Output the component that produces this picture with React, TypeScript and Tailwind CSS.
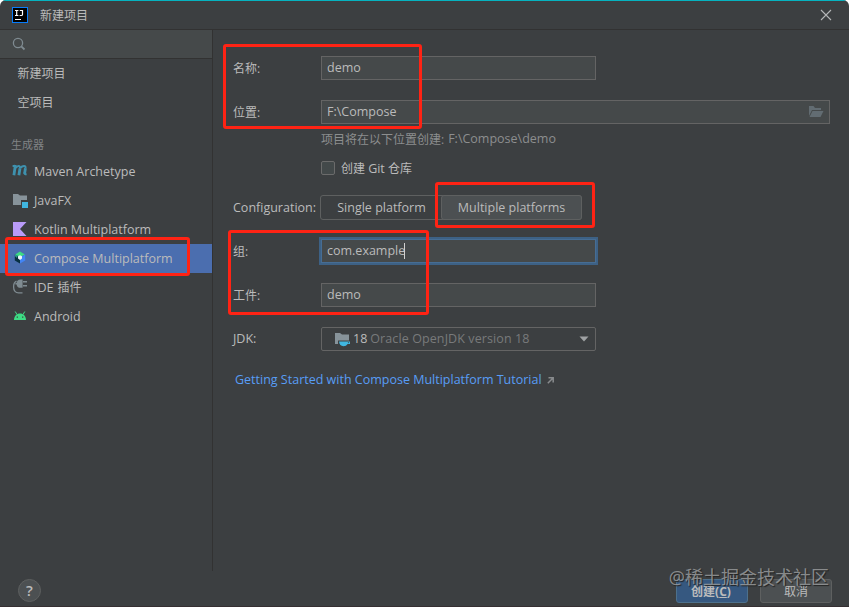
import React from 'react';
import clsx from 'clsx';

const latin = 'text-[12.5px]';

function Frame({ className }: { className: string }) {
  return (
    <div
      className={clsx('pointer-events-none absolute rounded-[3px] border-3 border-[#ff2314]', className)}
    />
  );
}

function MavenIcon() {
  return (
    <svg width="16" height="16" viewBox="0 0 16 16" fill="none" stroke="#3e91ae">
      <path strokeWidth="2.8" d="M3.400 2L1.900 12.200M8 5.200L6.900 12.200M13.400 5.200L12.600 10.600" />
      <path strokeWidth="2" d="M0.600 2.900H4M3.500 5Q5 2.900 6.600 2.900T8 5.400M8.400 5Q10 2.900 12 2.900T13.400 5.400M12.300 9.600Q12.200 11.300 14.600 11.200" />
    </svg>
  );
}

function JavaFxIcon() {
  return (
    <svg width="16" height="16" viewBox="0 0 16 16">
      <path fill="#87939a" d="M1 2H6L8 3.500H15V8H9V13H1Z" />
      <path fill="#40b6e0" d="M10 10H16V16H10Z" />
    </svg>
  );
}

function KotlinIcon() {
  return (
    <svg width="16" height="16" viewBox="0 0 16 16">
      <path fill="#b99bf8" d="M1 1H14.500L8 8L14.500 15H1Z" />
    </svg>
  );
}

function ComposeIcon() {
  return (
    <svg width="16" height="16" viewBox="0 0 16 16">
      <path fill="#3ddc84" d="M8 1.600L12.800 4.400L8 7L3.200 4.400Z" />
      <path fill="#083042" d="M2.800 4.600L8 7.600V13.600L2.800 10.600Z" />
      <path fill="#4285f4" d="M13.200 4.600L8 7.600V13.600L13.200 10.600Z" />
      <path fill="#2b9b87" d="M3.200 4.400L5.800 5.600L5 8L2.800 6Z" />
      <path fill="#e8f4f8" d="M8 5.200L10 6.200V8.400L8 10L6 8.400V6.200Z" />
    </svg>
  );
}

function PluginIcon() {
  return (
    <svg width="16" height="16" viewBox="0 0 16 16">
      <path fill="none" stroke="#7f8b91" strokeWidth="1.300" d="M4.500 2.200C2.500 3 1.600 5 1.600 8C1.600 12 3.600 13.800 6.600 13.800H10.500" />
      <path fill="#7f8b91" d="M10.600 0.600V8.800H8.600C6 8.800 5 7.600 4.600 5.400H3.400V4H4.600C5 1.800 6 0.600 8.600 0.600ZM11 2H15V3.400H11ZM11 6H15V7.400H11Z" />
    </svg>
  );
}

function AndroidIcon() {
  return (
    <svg width="16" height="16" viewBox="0 0 16 16">
      <path stroke="#3ddc84" d="M3.200 3.500L5 6.500M12.800 3.500L11 6.500" />
      <path fill="#3ddc84" d="M2 12C2 8 4.600 5.400 8 5.400S14 8 14 12Z" />
      <path fill="#3c3f41" d="M4.700 8.600H5.900V9.800H4.700ZM10.100 8.600H11.300V9.800H10.100Z" />
    </svg>
  );
}

const generators = [
  { name: 'Maven Archetype', icon: <MavenIcon /> },
  { name: 'JavaFX', icon: <JavaFxIcon /> },
  { name: 'Kotlin Multiplatform', icon: <KotlinIcon /> },
  { name: 'Compose Multiplatform', icon: <ComposeIcon />, selected: true },
  { name: 'IDE', suffix: '插件', icon: <PluginIcon /> },
  { name: 'Android', icon: <AndroidIcon /> },
];

function TitleBar() {
  return (
    <header className="flex h-[30px] items-center border-t border-b border-t-[#06b3c0] border-b-[#323232] pl-3 pr-[17px]">
      <svg width="16" height="16" viewBox="0 0 16 16">
        <rect x="0.500" y="0.500" width="15" height="15" fill="#000" stroke="#087cfa" />
        <path fill="none" stroke="#fff" strokeWidth="1.200" d="M3 3.500H6.400M4.700 3.500V8.500M3 8.500H6.400M7.800 3.500H10.500V7.400Q10.500 8.500 9.200 8.500H7.600M3 12.500H9" />
      </svg>
      <span className="ml-3 flex-1 pt-0.5">新建项目</span>
      <svg width="12" height="12" viewBox="0 0 12 12" stroke="#b4b6b7" strokeWidth="1.100">
        <path d="M1 1L11 11M11 1L1 11" />
      </svg>
    </header>
  );
}

function Sidebar() {
  return (
    <aside className="w-[213px] border-r border-[#323232]">
      <div className="flex h-[29px] items-center border-b border-[#323232] bg-[#45494a] pl-3">
        <svg width="14" height="14" viewBox="0 0 14 14" fill="none" stroke="#7f8b91" strokeWidth="1.300">
          <circle cx="6" cy="6" r="4.600" />
          <path strokeWidth="1.800" d="M9.300 9.300L12.500 12.500" />
        </svg>
      </div>
      <div className="flex h-[29px] items-center pl-[17.5px]">新建项目</div>
      <div className="flex h-[29px] items-center pl-[17.5px]">空项目</div>
      <div className="flex h-10 items-center pt-[17px] pl-[11px] text-[11px] text-[#808385]">生成器</div>
      {generators.map((g) => (
        <div
          key={g.name}
          className={clsx('flex h-[29px] items-center pl-3', g.selected && 'bg-[#4b6eaf]')}
        >
          <span className="-mt-px">{g.icon}</span>
          <span className={clsx('ml-1.5 pt-0.5 whitespace-nowrap', latin)}>
            {g.name}
            {g.suffix && <span className="ml-1 text-xs">{g.suffix}</span>}
          </span>
        </div>
      ))}
    </aside>
  );
}

function Row({ label, className, children }: { label?: string; className?: string; children: React.ReactNode }) {
  return (
    <div className={clsx('flex h-6 items-center', className)}>
      <span className="w-[88px] shrink-0 whitespace-nowrap pt-px">{label}</span>
      {children}
    </div>
  );
}

const field = 'flex h-6 items-center border bg-[#45494a] pl-[5px] ' + latin;

function ProjectForm() {
  return (
    <main className="flex-1 pt-[26px] pl-5">
      <Row label="名称:">
        <div className={clsx(field, 'w-[275px] border-[#646464]')}>demo</div>
      </Row>
      <Row label="位置:" className="mt-5">
        <div className={clsx(field, 'w-[509px] justify-between border-[#646464] pr-[5px]')}>
          F:\Compose
          <svg width="16" height="16" viewBox="0 0 16 16" fill="#626c72">
            <path d="M1 2H5.500L7 4H13V6H4L1 12Z" />
            <path d="M4.500 7H15.500L12.500 13H1.500Z" />
          </svg>
        </div>
      </Row>
      <div className="flex h-[29px] items-center pt-0.5 pl-[88px] whitespace-nowrap text-[#8c8e8f]">
        项目将在以下位置创建:<span className={clsx('ml-1', latin)}>F:\Compose\demo</span>
      </div>
      <Row className="mt-[3px]">
        <span className="size-[14px] rounded-[2px] border border-[#6b6b6b] bg-[#43494a]" />
        <span className="ml-1.5 pt-0.5">
          创建 <span className={latin}>Git</span> 仓库
        </span>
      </Row>
      <div className="mt-[15px] flex h-[25px] items-center">
        <span className={clsx('w-[87px] shrink-0 pt-0.5', latin)}>Configuration:</span>
        <div className={clsx('flex h-[25px] rounded-[3px] border border-[#5e6060]', latin)}>
          <span className="flex w-[120px] items-center justify-center pt-0.5 pl-px">Single platform</span>
          <span className="-my-px -mr-px flex w-[141px] items-center justify-center rounded-[3px] border border-[#5e6060] bg-[#4c5052] pt-0.5">
            Multiple platforms
          </span>
        </div>
      </div>
      <Row label="组:" className="mt-[19px]">
        <div className={clsx(field, 'w-[275px] border-[#466d94] ring-2 ring-[#3d6185]')}>
          com.example
          <span className="-ml-px h-4 w-px bg-[#d0d0d0]" />
        </div>
      </Row>
      <Row label="工件:" className="mt-5">
        <div className={clsx(field, 'w-[275px] border-[#646464]')}>demo</div>
      </Row>
      <div className="mt-5 flex h-6 items-center">
        <span className={clsx('w-[88px] shrink-0', latin)}>JDK:</span>
        <div
          className={clsx('flex h-6 w-[275px] items-center rounded-[2px] border border-[#646464] pr-1.5 pl-3', latin)}
        >
          <svg width="17" height="16" viewBox="0 0 17 16">
            <path fill="#87939a" d="M1 2H6L8 3.500H15V9.500H4V13H1Z" />
            <path fill="#40b6e0" d="M5 10.500H16V13H13.600Q12.400 15.200 9.500 15.200Q5.500 15 5 10.500Z" />
            <path fill="#3c3f41" d="M13.900 11.300H15.100V12.100H13.900Z" />
          </svg>
          <span className="ml-0.5">18</span>
          <span className="ml-[3px] flex-1 tracking-[0.1px] text-[#787a7b]">Oracle OpenJDK version 18</span>
          <svg width="10" height="6" viewBox="0 0 10 6" fill="#9fa2a4">
            <path d="M0.500 0.500H9.500L5 5.500Z" />
          </svg>
        </div>
      </div>
      <div className={clsx('mt-[17px] flex h-6 items-center pl-0.5 text-[#589df6]', latin)}>
        Getting Started with Compose Multiplatform Tutorial
        <svg className="ml-[5px]" width="7" height="7" viewBox="0 0 7 7" stroke="#888b8d" strokeWidth="1.500" fill="none">
          <path d="M1.500 0.800H6.200V5.500M6 1L0.800 6.200" />
        </svg>
      </div>
    </main>
  );
}

function Footer() {
  return (
    <footer className="flex h-9 items-start border-b border-[#352f32] pt-2 pr-[17px] pl-[18px]">
      <span className="flex size-[23px] items-center justify-center rounded-full border border-[#5e6060] bg-[#4c5052] pb-px text-[15px] font-semibold">
        ?
      </span>
      <button className="ml-auto flex h-6 w-[72px] items-center justify-center rounded-[3px] border border-[#4c708c] bg-[#365880] pt-px pr-0.5 font-bold">
        创建(<span className="underline">C</span>)
      </button>
      <button className="ml-3 flex h-6 w-[72px] items-center justify-center rounded-[3px] border border-[#5e6060] bg-[#4c5052] pt-px">
        取消
      </button>
    </footer>
  );
}

export default function App() {
  return (
    <div className="relative flex h-[607px] w-[849px] flex-col overflow-hidden rounded-t-[6px] bg-[#3c3f41] font-['Open_Sans','Noto_Sans_CJK_SC',sans-serif] text-xs text-[#bbbbbb]">
      <TitleBar />
      <div className="flex h-[541px]">
        <Sidebar />
        <ProjectForm />
      </div>
      <Footer />
      <Frame className="top-[44px] left-[223px] h-[85px] w-[199px]" />
      <Frame className="top-[182px] left-[435px] h-[46px] w-[160px]" />
      <Frame className="top-[230px] left-[228px] h-[85px] w-[201px]" />
      <Frame className="top-[237px] left-[5px] h-[39px] w-[185px]" />
      <span className="absolute right-5 bottom-[17px] text-[18px] leading-[26px] whitespace-nowrap text-[#a0a2a3]/80 [text-shadow:1px_1px_1px_#222]">
        @稀土掘金技术社区
      </span>
    </div>
  );
}
